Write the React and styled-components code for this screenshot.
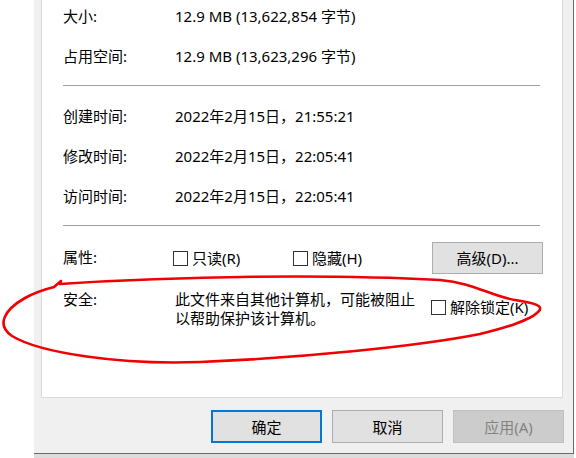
import React from 'react';
import styled, { createGlobalStyle } from 'styled-components';

const GlobalStyle = createGlobalStyle`
    html, body {
        margin: 0;
        padding: 0;
        background-color: #FFFFFF;
    }
    body {
        font-family: "Noto Sans", "Noto Sans CJK SC", sans-serif;
        font-size: 15px;
        color: #000000;
    }
`;

const Page = styled.div`
    position: relative;
    width: 576px;
    height: 458px;
    padding-left: 34px;
    box-sizing: border-box;
    overflow: hidden;
`;

const Window = styled.div`
    width: 540px;
    height: 454px;
    box-sizing: border-box;
    background-color: #F0F0F0;
    border-right: 1px solid #6B6B6B;
    border-bottom: 1px solid #6B6B6B;
    box-shadow: 0 4px 0 #DCDCDC;
    display: flex;
    flex-direction: column;
`;

const Panel = styled.div`
    margin: 0 10px 0 7px;
    height: 398px;
    box-sizing: border-box;
    background-color: #FFFFFF;
    border: 1px solid #DADADA;
    border-top: none;
    padding: 6px 22px 0 21px;
`;

const Section = styled.div`
    display: flex;
    flex-direction: column;
    gap: 20px;
    margin-top: ${props => props.top || 0}px;
`;

const InfoRow = styled.div`
    display: grid;
    grid-template-columns: 112px 1fr;
    line-height: 20px;
    white-space: nowrap;
`;

const Separator = styled.div`
    height: 1px;
    background-color: #A0A0A0;
    margin-top: 19px;
`;

const AttrRow = styled.div`
    display: flex;
    align-items: center;
    height: 32px;
    margin-top: 16px;
    line-height: 20px;
`;

const AttrLabel = styled.span`
    width: 110px;
    margin-top: -2px;
`;

const CheckItem = styled.label`
    display: flex;
    align-items: center;
    gap: 4px;
    width: ${props => props.width ? `${props.width}px` : 'auto'};
    margin-top: ${props => props.shift || 0}px;
    line-height: 20px;
    white-space: nowrap;
`;

const Box = styled.span`
    width: 13px;
    height: 13px;
    border: 1px solid #333333;
    background-color: #FFFFFF;
    flex-shrink: 0;
`;

const AdvancedButton = styled.button`
    margin-left: auto;
    margin-right: -3px;
    width: 111px;
    height: 32px;
    border: 1px solid #ADADAD;
    background-color: #E1E1E1;
    font: inherit;
    color: #000000;
    padding: 0;
`;

const SecurityRow = styled.div`
    display: grid;
    grid-template-columns: 112px 256px 1fr;
    align-items: start;
    margin-top: 16px;
    line-height: 19px;
`;

const Note = styled.div`
    white-space: nowrap;
`;

const Footer = styled.div`
    display: flex;
    justify-content: flex-end;
    gap: 10px;
    padding: 12px 9px 0 0;
`;

const DialogButton = styled.button`
    width: 111px;
    height: 33px;
    box-sizing: border-box;
    padding: 0;
    font: inherit;
    color: #000000;
    background-color: #E1E1E1;
    border: 1px solid #ADADAD;
`;

const DefaultButton = styled(DialogButton)`
    border: 2px solid #0078D7;
`;

const DisabledButton = styled(DialogButton)`
    background-color: #CCCCCC;
    border-color: #BFBFBF;
    color: #838383;
`;

const Scribble = styled.svg`
    position: absolute;
    left: 0;
    top: 0;
    pointer-events: none;
`;

const Checkbox = ({ children, width, shift }) => (
    <CheckItem width={width} shift={shift}>
        <Box />
        <span>{children}</span>
    </CheckItem>
);

const App = () => {
    return (
        <Page>
            <GlobalStyle />
            <Window>
                <Panel>
                    <Section>
                        <InfoRow><span>大小:</span><span>12.9 MB (13,622,854 字节)</span></InfoRow>
                        <InfoRow><span>占用空间:</span><span>12.9 MB (13,623,296 字节)</span></InfoRow>
                    </Section>
                    <Separator />
                    <Section top={20}>
                        <InfoRow><span>创建时间:</span><span>2022年2月15日，21:55:21</span></InfoRow>
                        <InfoRow><span>修改时间:</span><span>2022年2月15日，22:05:41</span></InfoRow>
                        <InfoRow><span>访问时间:</span><span>2022年2月15日，22:05:41</span></InfoRow>
                    </Section>
                    <Separator />
                    <AttrRow>
                        <AttrLabel>属性:</AttrLabel>
                        <Checkbox width={120}>只读(R)</Checkbox>
                        <Checkbox>隐藏(H)</Checkbox>
                        <AdvancedButton>高级(D)...</AdvancedButton>
                    </AttrRow>
                    <SecurityRow>
                        <span>安全:</span>
                        <Note>此文件来自其他计算机，可能被阻止<br />以帮助保护该计算机。</Note>
                        <Checkbox shift={7}>解除锁定(K)</Checkbox>
                    </SecurityRow>
                </Panel>
                <Footer>
                    <DefaultButton>确定</DefaultButton>
                    <DialogButton>取消</DialogButton>
                    <DisabledButton>应用(A)</DisabledButton>
                </Footer>
            </Window>
            <Scribble width="576" height="458" viewBox="0 0 576 458">
                <path
                    d="M 54 287 L 61 281 L 60 284
                       C 180 276, 330 274, 440 280
                       C 475 283, 490 296, 515 300
                       C 535 303, 545 306, 538 312
                       C 530 320, 505 328, 480 334
                       C 420 346, 300 358, 200 362
                       C 120 365, 40 353, 12 336
                       C -4 325, 4 310, 25 298
                       C 36 292, 46 289, 54 287"
                    fill="none"
                    stroke="#F00000"
                    strokeWidth="2.6"
                    strokeLinecap="round"
                    strokeLinejoin="round"
                />
            </Scribble>
        </Page>
    );
};

export default App;
